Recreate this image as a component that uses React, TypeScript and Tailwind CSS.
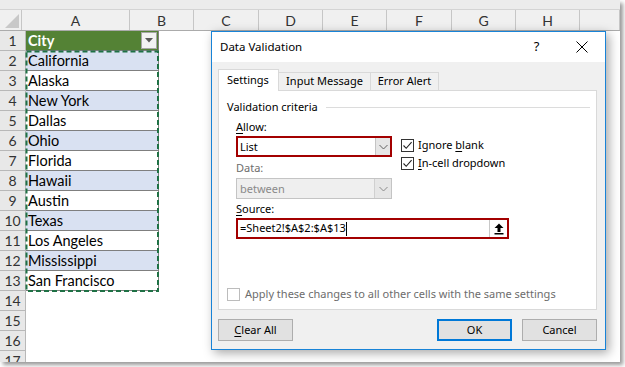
import React from "react";

const cities = [
  "California",
  "Alaska",
  "New York",
  "Dallas",
  "Ohio",
  "Florida",
  "Hawaii",
  "Austin",
  "Texas",
  "Los Angeles",
  "Mississippi",
  "San Francisco",
];

const otherCols = [
  { label: "B", w: "w-[64px]" },
  { label: "C", w: "w-[65px]" },
  { label: "D", w: "w-[64px]" },
  { label: "E", w: "w-[64px]" },
  { label: "F", w: "w-[65px]" },
  { label: "G", w: "w-[64px]" },
  { label: "H", w: "w-[64px]" },
  { label: "", w: "w-[40px]" },
];

const Chevron = ({ color = "#606060" }: { color?: string }) => (
  <svg width="9" height="6" viewBox="0 0 9 6">
    <path d="M0.5 1 L4.5 5 L8.5 1" fill="none" stroke={color} strokeWidth="1" />
  </svg>
);

const CheckBox = ({ checked, disabled }: { checked?: boolean; disabled?: boolean }) => (
  <div
    className={`w-[13px] h-[13px] border bg-white flex items-center justify-center ${
      disabled ? "border-[#bcbcbc]" : "border-[#333333]"
    }`}
  >
    {checked && (
      <svg width="11" height="11" viewBox="0 0 11 11">
        <path d="M1.5 5.5 L4.2 8.3 L9.6 2.2" fill="none" stroke="#222" strokeWidth="1.1" />
      </svg>
    )}
  </div>
);

const Sheet = () => (
  <div className="flex flex-col" style={{ fontFamily: "Lato, 'Liberation Sans', sans-serif" }}>
    <div className="h-[10px] bg-[#ececec] border-b border-[#d4d4d4]" />
    <div className="flex h-[21px] bg-[#f0f0f0] border-b border-[#ababab] text-[14px] text-[#333]">
      <div className="w-[26px] border-r border-[#c6c6c6] flex items-end justify-end p-[2px]">
        <svg width="14" height="14" viewBox="0 0 14 14">
          <path d="M14 0 L14 14 L0 14 Z" fill="#c8c8c8" />
        </svg>
      </div>
      <div className="w-[133px] border-r border-[#c6c6c6] flex items-center justify-center">A</div>
      {otherCols.map((c, i) => (
        <div key={i} className={`${c.w} shrink-0 border-r border-[#c6c6c6] flex items-center justify-center`}>
          {c.label}
        </div>
      ))}
    </div>
    {Array.from({ length: 17 }).map((_, i) => {
      const n = i + 1;
      const inTable = n <= 13;
      let cell: React.ReactNode = null;
      let cellCls = "bg-white border-r border-transparent";
      if (n === 1) {
        cellCls = "bg-[#548235] border-b border-r border-[#7f7f7f]";
        cell = (
          <div className="flex flex-1 items-center justify-between h-full pl-[2px] pr-px">
            <span className="font-bold text-white text-[14.5px]">City</span>
            <div className="w-[16px] h-[17px] bg-[#f2f2f2] border border-[#a6a6a6] flex items-center justify-center">
              <svg width="8" height="5" viewBox="0 0 8 5">
                <path d="M0 0 H8 L4 4.5 Z" fill="#595959" />
              </svg>
            </div>
          </div>
        );
      } else if (inTable) {
        cellCls = `${n % 2 === 0 ? "bg-[#d9e1f2]" : "bg-white"} border-b border-r border-[#7f7f7f]`;
        cell = <span className="pl-[2px] text-[14.5px] text-black leading-[19px]">{cities[n - 2]}</span>;
      }
      return (
        <div key={n} className="flex h-5">
          <div className="w-[26px] shrink-0 bg-[#e8e8e8] border-r border-b border-[#b8b8b8] flex items-center justify-center text-[14px] text-[#333]">
            {n}
          </div>
          <div className={`w-[133px] shrink-0 ${cellCls} flex items-center`}>{cell}</div>
          <div className="flex-1 bg-white" />
        </div>
      );
    })}
  </div>
);

const Dialog = () => (
  <div
    className="absolute left-[211px] top-[31px] w-[395px] h-[319px] border border-[#1883d7] bg-[#f0f0f0] flex flex-col text-[11px] text-black shadow-[3px_3px_10px_rgba(0,0,0,0.35)]"
    style={{ fontFamily: "'Noto Sans', 'Open Sans', sans-serif" }}
  >
    <div className="h-[30px] bg-white flex items-center pl-2">
      <span className="flex-1 text-[11.5px]">Data Validation</span>
      <span className="w-[45px] text-center text-[13px]">?</span>
      <div className="w-[46px] flex items-center justify-center">
        <svg width="12" height="12" viewBox="0 0 12 12">
          <path d="M0.5 0.5 L11.5 11.5 M11.5 0.5 L0.5 11.5" stroke="#000" strokeWidth="1" />
        </svg>
      </div>
    </div>

    <div className="flex-1 flex flex-col pl-[6px] pr-[8px] pt-[7px]">
      <div className="flex items-end h-[22px] -mb-px relative z-10">
        <div className="w-[61px] h-[22px] bg-white border border-b-0 border-[#d9d9d9] flex items-center pl-[8px]">
          Settings
        </div>
        <div className="w-[92px] h-[19px] border border-l-0 border-[#d9d9d9] flex items-center justify-center">
          Input Message
        </div>
        <div className="w-[68px] h-[19px] border border-l-0 border-[#d9d9d9] flex items-center justify-center">
          Error Alert
        </div>
      </div>

      <div className="h-[220px] bg-white border border-[#d9d9d9] flex flex-col pl-[8px] pr-[6px] pt-[8px] pb-[7px]">
        <div className="flex items-center h-4">
          <span>Validation criteria</span>
          <div className="flex-1 h-px bg-[#dcdcdc] ml-[8px]" />
        </div>

        <div className="ml-[9px] mt-[4px] flex">
          <div className="w-[156px] flex flex-col">
            <div className="h-4 flex items-center">
              <span>
                <u className="underline-offset-2">A</u>llow:
              </span>
            </div>
            <div className="mt-px h-[21px] border-2 border-[#a30000] bg-white flex">
              <span className="flex-1 pl-[2px] leading-[17px]">List</span>
              <div className="w-[15px] bg-[#e6e6e6] border-l border-[#c4c4c4] flex items-center justify-center">
                <Chevron />
              </div>
            </div>
            <div className="mt-[3px] h-4 flex items-center text-[#6d6d6d]">Data:</div>
            <div className="mt-[2px] h-[21px] border border-[#c4c4c4] bg-[#efefef] flex">
              <span className="flex-1 pl-[3px] leading-[19px] text-[#8a8a8a]">between</span>
              <div className="w-[17px] border-l border-[#d0d0d0] bg-[#e6e6e6] flex items-center justify-center">
                <Chevron color="#8a8a8a" />
              </div>
            </div>
          </div>
          <div className="ml-[9px] pt-[17px] flex flex-col">
            <div className="h-[18px] flex items-center gap-[4px]">
              <CheckBox checked />
              <span>
                Ignore <u className="underline-offset-2">b</u>lank
              </span>
            </div>
            <div className="h-[18px] flex items-center gap-[4px]">
              <CheckBox checked />
              <span>
                <u className="underline-offset-2">I</u>n-cell dropdown
              </span>
            </div>
          </div>
        </div>

        <div className="ml-[9px] mt-[2px] h-4 flex items-center">
          <span>
            <u className="underline-offset-2">S</u>ource:
          </span>
        </div>
        <div className="ml-[9px] mt-px w-[273px] h-[21px] border-2 border-[#a30000] bg-white flex">
          <div className="flex-1 flex items-center pl-[2px]">
            <span>=Sheet2!$A$2:$A$13</span>
            <span className="w-px h-[14px] bg-black" />
          </div>
          <div className="w-[18px] border-l border-[#c8c8c8] flex items-center justify-center">
            <svg width="10" height="12" viewBox="0 0 10 12">
              <path d="M5 0.5 L9.5 5 H6.5 V9 H3.5 V5 H0.5 Z" fill="#000" />
              <rect x="0.5" y="10" width="9" height="1.5" fill="#000" />
            </svg>
          </div>
        </div>

        <div className="mt-auto h-4 flex items-center gap-[5px]">
          <CheckBox disabled />
          <span className="text-[#6d6d6d]">Apply these changes to all other cells with the same settings</span>
        </div>
      </div>

      <div className="mt-[9px] flex h-[22px]">
        <button className="w-[75px] h-[22px] bg-[#e1e1e1] border border-[#adadad] flex items-center justify-center">
          <span>
            <u className="underline-offset-2">C</u>lear All
          </span>
        </button>
        <div className="flex-1" />
        <button className="w-[75px] h-[22px] bg-[#e1e1e1] border-2 border-[#0078d7] flex items-center justify-center">
          OK
        </button>
        <button className="ml-[10px] w-[75px] h-[22px] bg-[#e1e1e1] border border-[#adadad] flex items-center justify-center">
          Cancel
        </button>
      </div>
    </div>
  </div>
);

export default function App() {
  return (
    <div className="w-[625px] h-[367px] bg-white overflow-hidden">
      <div className="relative w-[620px] h-[362px] bg-white overflow-hidden shadow-[3px_3px_4px_rgba(0,0,0,0.4)]">
        <Sheet />
        <svg className="absolute left-[25px] top-[50px]" width="135" height="243" viewBox="0 0 135 243">
          <rect x="1.5" y="1.5" width="131.5" height="239.5" fill="none" stroke="#1f7145" strokeWidth="2" strokeDasharray="5 3" />
        </svg>
        <Dialog />
      </div>
    </div>
  );
}
